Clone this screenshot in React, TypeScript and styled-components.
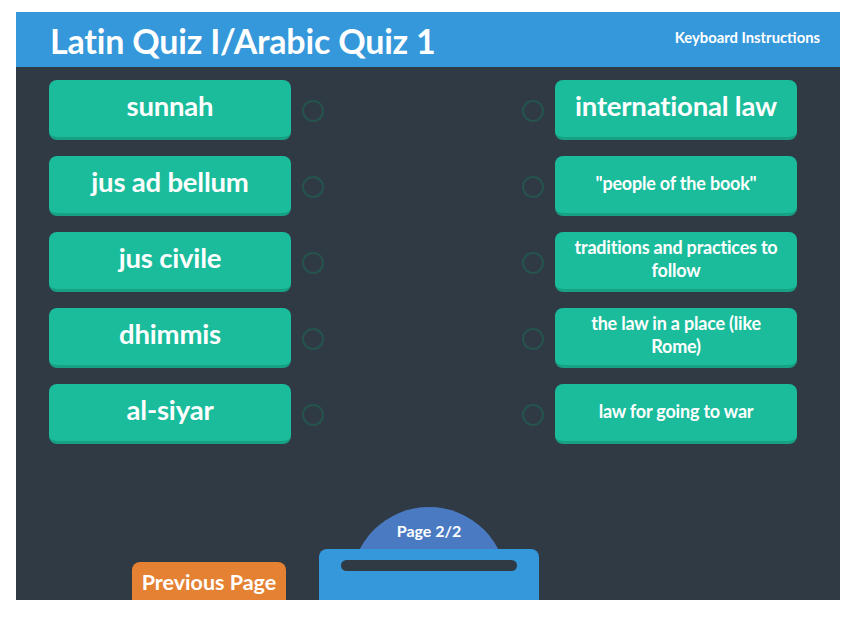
import styled, { createGlobalStyle } from "styled-components";

const GlobalStyle = createGlobalStyle`
  body {
    margin: 0;
    background: #ffffff;
    font-family: "Lato", "Open Sans", sans-serif;
  }
`;

interface IPair {
    term: string;
    answer: string;
    small: boolean;
}

const pairs: IPair[] = [
    { term: "sunnah", answer: "international law", small: false },
    { term: "jus ad bellum", answer: "\"people of the book\"", small: true },
    { term: "jus civile", answer: "traditions and practices to follow", small: true },
    { term: "dhimmis", answer: "the law in a place (like Rome)", small: true },
    { term: "al-siyar", answer: "law for going to war", small: true },
];

export default function App() {
    return (
        <>
            <GlobalStyle />
            <Page>
                <Quiz>
                    <Header>
                        <Title>Latin Quiz I/Arabic Quiz 1</Title>
                        <KeyLink>Keyboard Instructions</KeyLink>
                    </Header>
                    <Board>
                        {pairs.map((p) => (
                            <Row key={p.term}>
                                <Side>
                                    <Card small={false}>
                                        <CardText small={false}>{p.term}</CardText>
                                    </Card>
                                    <Dot />
                                </Side>
                                <Side>
                                    <Dot />
                                    <Card small={p.small}>
                                        <CardText small={p.small}>{p.answer}</CardText>
                                    </Card>
                                </Side>
                            </Row>
                        ))}
                    </Board>
                    <Footer>
                        <PrevButton type="button">Previous Page</PrevButton>
                        <PageWidget>
                            <Dome>Page 2/2</Dome>
                            <Tray>
                                <Slot />
                            </Tray>
                        </PageWidget>
                    </Footer>
                </Quiz>
            </Page>
        </>
    );
}

const Page = styled.div`
  padding: 12px 0 0 16px;
`;

const Quiz = styled.div`
  width: 824px;
  height: 588px;
  background: #303a45;
  display: flex;
  flex-direction: column;
  overflow: hidden;
`;

const Header = styled.div`
  height: 55px;
  background: #3598db;
  display: flex;
  align-items: center;
  justify-content: space-between;
  padding: 0 20px 0 34px;
  color: #ffffff;
`;

const Title = styled.div`
  font-size: 34px;
  font-weight: 700;
  letter-spacing: -0.2px;
  padding-top: 2px;
`;

const KeyLink = styled.div`
  font-size: 14.8px;
  font-weight: 700;
  margin-top: -5px;
`;

const Board = styled.div`
  flex: 1;
  display: flex;
  flex-direction: column;
  gap: 16px;
  padding: 13px 43px 0 33px;
`;

const Row = styled.div`
  display: flex;
  justify-content: space-between;
`;

const Side = styled.div`
  display: flex;
  align-items: center;
  gap: 11px;
`;

const Card = styled.div<{ small: boolean }>`
  width: 242px;
  height: 60px;
  box-sizing: border-box;
  background: #1abc9c;
  border-radius: 8px;
  border-bottom: 3px solid #17a083;
  display: flex;
  align-items: center;
  justify-content: center;
  padding: 0 10px ${(props) => (props.small ? "3px" : "6px")};
  color: #ffffff;
  text-align: center;
`;

const CardText = styled.div<{ small: boolean }>`
  font-weight: 700;
  font-size: ${(props) => (props.small ? "18px" : "27.5px")};
  line-height: ${(props) => (props.small ? "23px" : "32px")};
  letter-spacing: -0.2px;
`;

const Dot = styled.div`
  width: 22px;
  height: 22px;
  box-sizing: border-box;
  border: 2px solid #25544d;
  border-radius: 50%;
  margin-top: 2px;
`;

const Footer = styled.div`
  height: 51px;
  display: flex;
  align-items: flex-start;
  gap: 33px;
  padding-left: 116px;
`;

const PrevButton = styled.button`
  margin-top: 13px;
  width: 154px;
  height: 46px;
  border: none;
  border-radius: 8px;
  background: #e58133;
  color: #ffffff;
  font-family: inherit;
  font-size: 21.5px;
  font-weight: 700;
  padding: 0 0 6px;
  white-space: nowrap;
`;

const PageWidget = styled.div`
  position: relative;
  width: 220px;
  height: 60px;
`;

const Dome = styled.div`
  position: absolute;
  left: 32px;
  top: -42px;
  width: 156px;
  height: 156px;
  border-radius: 50%;
  background: #4a7bc2;
  color: #ffffff;
  font-size: 16px;
  font-weight: 700;
  text-align: center;
  box-sizing: border-box;
  padding-top: 14px;
`;

const Tray = styled.div`
  position: relative;
  height: 60px;
  background: #3598db;
  border-radius: 8px 8px 0 0;
  padding: 11px 22px 0;
`;

const Slot = styled.div`
  height: 11px;
  background: #303a45;
  border-radius: 6px;
`;
